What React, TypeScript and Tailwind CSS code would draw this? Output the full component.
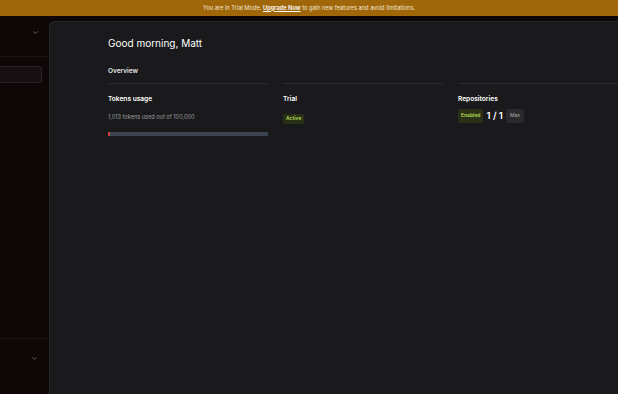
import React from "react";

function Chevron({ className = "" }: { className?: string }) {
  return (
    <svg width="7" height="7" viewBox="0 0 24 24" fill="none" stroke="currentColor" strokeWidth="2.5" strokeLinecap="round" strokeLinejoin="round" className={className}>
      <path d="m6 9 6 6 6-6" />
    </svg>
  );
}

export default function App() {
  return (
    <div className="w-[618px] h-[394px] flex flex-col bg-[#0e0607] overflow-hidden" style={{ fontFamily: "Inter, 'Noto Sans', sans-serif" }}>
      <div className="h-[16px] shrink-0 bg-[#a0660a] flex items-center justify-center text-[5.7px] text-[#f3e6d0]">
        <span>
          You are in Trial Mode. <span className="font-semibold underline text-white">Upgrade Now</span> to gain new features and avoid limitations.
        </span>
      </div>
      <div className="flex flex-1 min-h-0">
        <div className="w-[49px] shrink-0 flex flex-col">
          <div className="h-[41px] border-b border-[#1c1214] flex items-start justify-end pr-[10px] pt-[13px] text-[#8a8486]">
            <Chevron />
          </div>
          <div className="mt-[9px] h-[17px] w-[42px] rounded-r-[3px] border border-l-0 border-[#2a2224] bg-[#161012]" />
          <div className="flex-1" />
          <div className="h-[56px] border-t border-[#1c1214] flex items-start justify-end pr-[11px] pt-[16px] text-[#8a8486]">
            <Chevron />
          </div>
        </div>
        <div className="flex-1 mt-[5px] rounded-tl-[6px] bg-[#1a1a1c] border-l border-t border-[#262628] pl-[58px] pt-[16px]">
          <div className="text-[10px] text-white leading-none">Good morning, Matt</div>
          <div className="mt-[20px] text-[6.5px] font-semibold text-[#e5e5e5] leading-none">Overview</div>
          <div className="mt-[8px] grid grid-cols-[160px_160px_160px] gap-x-[15px]">
            <div className="border-t border-[#2a2a2c] pt-[12px]">
              <div className="text-[6.6px] font-semibold text-white leading-none">Tokens usage</div>
              <div className="mt-[13px] text-[5.6px] text-[#9a9a9e] leading-none">1,013 tokens used out of 100,000</div>
              <div className="mt-[11px] h-[4px] w-full bg-[#3c4452] rounded-[1px] flex">
                <div className="w-[2px] h-full bg-[#d24040] rounded-l-[1px]" />
              </div>
            </div>
            <div className="border-t border-[#2a2a2c] pt-[12px]">
              <div className="text-[6.6px] font-semibold text-white leading-none">Trial</div>
              <div className="mt-[9px] inline-flex items-center h-[10px] px-[3px] rounded-[2px] bg-[#283015] text-[5px] font-semibold text-[#b8d957]">Active</div>
            </div>
            <div className="border-t border-[#2a2a2c] pt-[12px]">
              <div className="text-[6.6px] font-semibold text-white leading-none">Repositories</div>
              <div className="mt-[7px] flex items-center gap-[3px]">
                <div className="inline-flex items-center h-[14px] px-[3px] rounded-[2px] bg-[#283015] text-[5px] font-semibold text-[#b8d957]">Enabled</div>
                <div className="text-[9.5px] font-semibold text-white leading-none">1 / 1</div>
                <div className="inline-flex items-center h-[14px] px-[4px] rounded-[2px] bg-[#2a2a2c] text-[5px] text-[#b0b0b4]">Max</div>
              </div>
            </div>
          </div>
        </div>
      </div>
    </div>
  );
}
